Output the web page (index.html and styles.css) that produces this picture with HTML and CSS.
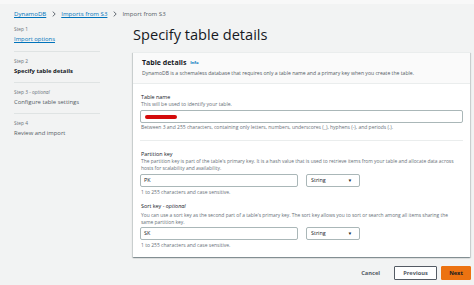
FILE: index.html
```html
<!DOCTYPE html>
<html lang="en">
<head>
<meta charset="utf-8">
<title>Specify table details</title>
<link rel="stylesheet" href="styles.css">
</head>
<body>
<div class="page">
  <nav class="crumbs">
    <a class="crumb-link">DynamoDB</a>
    <svg class="chev" viewBox="0 0 4 6" width="4" height="6"><path d="M0.7 0.6 L3.2 3 L0.7 5.4" fill="none" stroke="#545b64" stroke-width="0.9"/></svg>
    <a class="crumb-link">Imports from S3</a>
    <svg class="chev" viewBox="0 0 4 6" width="4" height="6"><path d="M0.7 0.6 L3.2 3 L0.7 5.4" fill="none" stroke="#545b64" stroke-width="0.9"/></svg>
    <span class="crumb-current">Import from S3</span>
  </nav>

  <div class="layout">
    <aside class="steps">
      <div class="step">
        <div class="step-no">Step 1</div>
        <a class="step-link">Import options</a>
      </div>
      <div class="step">
        <div class="step-no">Step 2</div>
        <div class="step-current">Specify table details</div>
      </div>
      <div class="step">
        <div class="step-no">Step 3 - <i>optional</i></div>
        <div class="step-label">Configure table settings</div>
      </div>
      <div class="step">
        <div class="step-no">Step 4</div>
        <div class="step-label">Review and import</div>
      </div>
    </aside>

    <main class="content">
      <h1 class="title">Specify table details</h1>
      <section class="card">
        <header class="card-head">
          <h2 class="card-title">Table details <a class="info">Info</a></h2>
          <p class="card-desc">DynamoDB is a schemaless database that requires only a table name and a primary key when you create the table.</p>
        </header>
        <div class="card-body">
          <div class="field field-first">
            <div class="label">Table name</div>
            <div class="hint">This will be used to identify your table.</div>
            <div class="input input-full"><span class="redact"></span></div>
            <div class="constraint">Between 3 and 255 characters, containing only letters, numbers, underscores (_), hyphens (-), and periods (.).</div>
          </div>
          <div class="field field-pk">
            <div class="label">Partition key</div>
            <div class="hint">The partition key is part of the table's primary key. It is a hash value that is used to retrieve items from your table and allocate data across hosts for scalability and availability.</div>
            <div class="key-row">
              <div class="input input-key">PK</div>
              <div class="select">String<span class="caret">&#9660;</span></div>
            </div>
            <div class="constraint">1 to 255 characters and case sensitive.</div>
          </div>
          <div class="field field-sk">
            <div class="label">Sort key - <i>optional</i></div>
            <div class="hint">You can use a sort key as the second part of a table's primary key. The sort key allows you to sort or search among all items sharing the same partition key.</div>
            <div class="key-row">
              <div class="input input-key">SK</div>
              <div class="select">String<span class="caret">&#9660;</span></div>
            </div>
            <div class="constraint">1 to 255 characters and case sensitive.</div>
          </div>
        </div>
      </section>
    </main>
  </div>

  <footer class="actions">
    <button class="btn btn-link">Cancel</button>
    <button class="btn btn-normal">Previous</button>
    <button class="btn btn-primary">Next</button>
  </footer>
</div>
</body>
</html>
```

FILE: styles.css
```css
* { box-sizing: border-box; }

html, body {
  margin: 0;
  padding: 0;
  background: #f2f3f3;
  font-family: "Open Sans", "Noto Sans", sans-serif;
  color: #16191f;
}

.page {
  width: 474px;
  height: 285px;
  overflow: hidden;
  background: linear-gradient(#f8f8f8 0, #f8f8f8 4px, #f2f3f3 4px);
}

/* breadcrumbs */
.crumbs {
  display: flex;
  align-items: center;
  gap: 5.5px;
  padding: 9px 0 0 14px;
  height: 19px;
  font-size: 6.1px;
  line-height: 10px;
}
.crumb-link {
  color: #0073bb;
  text-decoration: underline;
  text-decoration-thickness: 0.4px;
  text-underline-offset: 1px;
}
.crumb-current { color: #545b64; }
.chev { display: block; }

/* layout */
.layout {
  display: flex;
  padding: 5px 4px 0 14px;
}

.steps {
  width: 86px;
  flex: none;
  margin-right: 33px;
}
.step {
  padding: 4px 0 6px;
  border-bottom: 1px solid #dfe3e3;
}
.step:first-child { padding-top: 0; padding-bottom: 7px; }
.step:last-child { border-bottom: none; }
.step-no {
  font-size: 4.8px;
  line-height: 10px;
  color: #687078;
}
.step-no i { font-style: italic; }
.step-link, .step-current, .step-label {
  display: block;
  font-size: 5.9px;
  line-height: 10px;
}
.step-link {
  color: #0073bb;
  text-decoration: underline;
  text-decoration-thickness: 0.4px;
  text-underline-offset: 1px;
}
.step-current { font-weight: 700; color: #16191f; }
.step-label { color: #545b64; }

.content {
  flex: 1;
  min-width: 0;
}
.title {
  margin: 0 0 8px;
  font-size: 14.6px;
  line-height: 20px;
  font-weight: 400;
  color: #16191f;
}

/* card */
.card {
  background: #fff;
  border-top: 1px solid #eaeded;
  box-shadow: 0 1px 1px 0 rgba(0, 28, 36, 0.3), 1px 1px 1px 0 rgba(0, 28, 36, 0.12), -1px 1px 1px 0 rgba(0, 28, 36, 0.12);
  height: 205px;
}
.card-head {
  background: #fafafa;
  border-bottom: 1px solid #eaeded;
  padding: 5px 9px 6px;
}
.card-title {
  margin: 0;
  font-size: 7px;
  line-height: 10px;
  font-weight: 700;
  color: #16191f;
}
.info {
  font-size: 4.2px;
  font-weight: 700;
  color: #0073bb;
  margin-left: 2px;
  vertical-align: 1px;
}
.card-desc {
  margin: 1px 0 0;
  font-size: 5.1px;
  line-height: 8px;
  color: #545b64;
}

.card-body {
  padding: 9px 7px 0;
}
.field-first {
  padding-bottom: 9px;
  border-bottom: 1px solid #eaeded;
}
.field-pk { padding-top: 10px; }
.field-sk { padding-top: 7px; }

.label {
  font-size: 5.4px;
  line-height: 7px;
  color: #16191f;
  padding-left: 1px;
}
.label i { font-style: italic; }
.field-first .label { line-height: 8px; }
.field-sk .label { margin-bottom: 2px; }
.hint {
  font-size: 4.9px;
  line-height: 7px;
  color: #687078;
  padding-left: 1px;
  padding-right: 8px;
}
.field-first .hint { font-size: 5.1px; }
.constraint {
  font-size: 5px;
  line-height: 8px;
  color: #687078;
  padding-left: 1px;
}
.field-pk .constraint, .field-sk .constraint { margin-top: 1px; }

.input {
  margin-top: 2px;
  height: 13px;
  border: 1px solid #aab7b8;
  border-radius: 2px;
  background: #fff;
  font-size: 5.4px;
  line-height: 11px;
  padding: 0 3px;
  color: #16191f;
  display: flex;
  align-items: center;
}
.input-full { width: 100%; }
.redact {
  display: block;
  width: 32px;
  height: 4px;
  border-radius: 2px;
  background: #d40b0b;
  margin-left: 1px;
}
.key-row {
  display: flex;
  gap: 8px;
  margin-top: 2px;
}
.field-sk .key-row { margin-top: 1px; }
.key-row .input { margin-top: 0; }
.input-key { width: 158px; }
.select {
  width: 54px;
  height: 13px;
  border: 1px solid #aab7b8;
  border-radius: 2px;
  background: #fff;
  font-size: 5.4px;
  line-height: 11px;
  padding: 0 0 0 4px;
  color: #16191f;
  display: flex;
  align-items: center;
  justify-content: space-between;
}
.caret {
  font-size: 4.4px;
  color: #16191f;
  margin-right: 7px;
}

/* footer */
.actions {
  display: flex;
  justify-content: flex-end;
  align-items: center;
  gap: 4px;
  padding: 9px 3px 0 0;
}
.btn {
  font-family: "Open Sans", "Noto Sans", sans-serif;
  font-size: 5.7px;
  font-weight: 700;
  height: 14px;
  line-height: 12px;
  border-radius: 1px;
  padding: 0;
  margin: 0;
  cursor: pointer;
}
.btn-link {
  background: none;
  border: none;
  color: #545b64;
  margin-right: 8px;
  padding: 0 2px;
}
.btn-normal {
  width: 43px;
  background: #fff;
  border: 1px solid #545b64;
  color: #545b64;
}
.btn-primary {
  width: 30px;
  background: #ec7211;
  border: 1px solid #ec7211;
  color: #16191f;
}
```
